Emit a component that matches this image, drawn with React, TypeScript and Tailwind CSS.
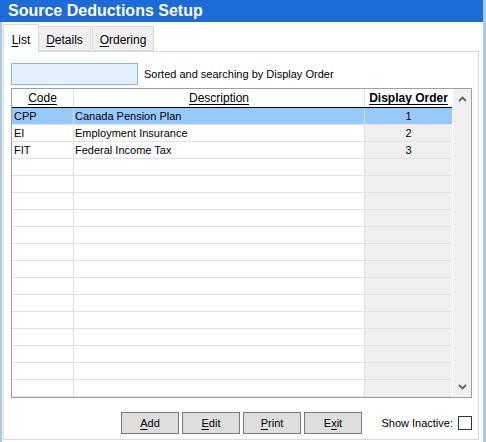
import type { ReactNode } from "react";

type Row = { code: string; description: string; order: number | null };

const rows: Row[] = [
  { code: "CPP", description: "Canada Pension Plan", order: 1 },
  { code: "EI", description: "Employment Insurance", order: 2 },
  { code: "FIT", description: "Federal Income Tax", order: 3 },
  ...Array.from({ length: 14 }, () => ({ code: "", description: "", order: null })),
];

const font = { fontFamily: '"Liberation Sans", Arial, sans-serif' };

/** Label with one underlined access-key letter. */
function Key({ pre = "", k, post }: { pre?: string; k: string; post: string }) {
  return (
    <span>
      {pre}
      <span className="underline underline-offset-2">{k}</span>
      {post}
    </span>
  );
}

function Btn({ children }: { children: ReactNode }) {
  return (
    <button className="flex h-[22px] w-[58px] items-center justify-center border border-[#7a7a7a] bg-[#dedede] text-[11px] text-black">
      {children}
    </button>
  );
}

export default function App() {
  return (
    <div className="flex h-[442px] w-[486px] bg-white text-black" style={font}>
      <div className="flex w-[483px] flex-col">
        {/* title bar */}
        <div className="flex h-[22px] shrink-0 items-center bg-[#1d6bd7] pl-[8px] text-[16px] font-bold text-white">
          Source Deductions Setup
        </div>

        <div className="flex flex-1 flex-col border-l-2 border-[#a9c8ee] pl-[1px] pr-[4px] pt-[2px]">
          {/* tabs */}
          <div className="relative z-10 flex h-[27px] items-end">
            <div className="flex h-[28px] w-[36px] items-start justify-center self-start border border-b-0 border-[#d9d9d9] bg-white pt-[6px] text-[12px]">
              <Key k="L" post="ist" />
            </div>
            <div className="flex h-[25px] w-[52px] items-center justify-center border border-l-0 border-[#d9d9d9] bg-[#f0f0f0] pt-[2px] text-[12px]">
              <Key k="D" post="etails" />
            </div>
            <div className="ml-[1px] flex h-[25px] w-[62px] items-center justify-center border border-[#d9d9d9] bg-[#f0f0f0] pt-[2px] text-[12px]">
              <Key k="O" post="rdering" />
            </div>
          </div>

          {/* tab panel */}
          <div className="flex h-[389px] flex-col border border-[#d9d9d9] pl-[7px] pr-[6px] pt-[11px]">
            <div className="flex items-center">
              <div className="h-[22px] w-[127px] border border-[#86b8ea] bg-[#e4f0fc]" />
              <span className="ml-[6px] text-[11px]">Sorted and searching by Display Order</span>
            </div>

            {/* grid */}
            <div className="mt-[3px] flex h-[310px] border border-[#a0a0a0]">
              <div className="flex w-[440px] flex-col">
                <div className="flex h-[19px] shrink-0 border-b border-black text-[12px]">
                  <div className="flex w-[62px] items-center justify-center border-r border-[#e0e0e0]">
                    <span className="underline underline-offset-2">Code</span>
                  </div>
                  <div className="flex w-[291px] items-center justify-center border-r border-[#e0e0e0]">
                    <span className="underline underline-offset-2">Description</span>
                  </div>
                  <div className="flex w-[87px] items-center justify-center font-bold">
                    <span className="underline underline-offset-2">Display Order</span>
                  </div>
                </div>
                {rows.map((r, i) => {
                  const sel = i === 0;
                  return (
                    <div key={i} className={`flex h-[17px] shrink-0 border-b border-[#e3e3e3] text-[11px] ${sel ? "bg-[#99c8fa]" : ""}`}>
                      <div className="flex w-[62px] items-center border-r border-[#e0e0e0] pl-[2px]">{r.code}</div>
                      <div className="flex w-[291px] items-center border-r border-[#e0e0e0] pl-[1px]">{r.description}</div>
                      <div className={`flex w-[87px] items-center justify-center ${sel ? "" : "bg-[#f0f0f0]"}`}>
                        {r.order}
                      </div>
                    </div>
                  );
                })}
              </div>

              {/* scrollbar */}
              <div className="flex w-[20px] flex-col items-center justify-between border-l border-white bg-[#f0f0f0] py-[7px]">
                <svg width="9" height="6" viewBox="0 0 9 6">
                  <path d="M1 5 L4.5 1.5 L8 5" fill="none" stroke="#606060" strokeWidth="1.8" />
                </svg>
                <svg width="9" height="6" viewBox="0 0 9 6">
                  <path d="M1 1 L4.5 4.5 L8 1" fill="none" stroke="#606060" strokeWidth="1.8" />
                </svg>
              </div>
            </div>

            {/* footer */}
            <div className="mt-[14px] flex items-center">
              <div className="ml-[110px] flex gap-[3px]">
                <Btn>
                  <Key k="A" post="dd" />
                </Btn>
                <Btn>
                  <Key k="E" post="dit" />
                </Btn>
                <Btn>
                  <Key k="P" post="rint" />
                </Btn>
                <Btn>
                  <Key pre="E" k="x" post="it" />
                </Btn>
              </div>
              <div className="ml-auto flex items-center gap-[5px] text-[11px]">
                <span>Show Inactive:</span>
                <span className="h-[14px] w-[14px] border border-[#333]" />
              </div>
            </div>
          </div>
        </div>
      </div>
      <div className="w-[3px] bg-[#a9c8ee]" />
    </div>
  );
}
